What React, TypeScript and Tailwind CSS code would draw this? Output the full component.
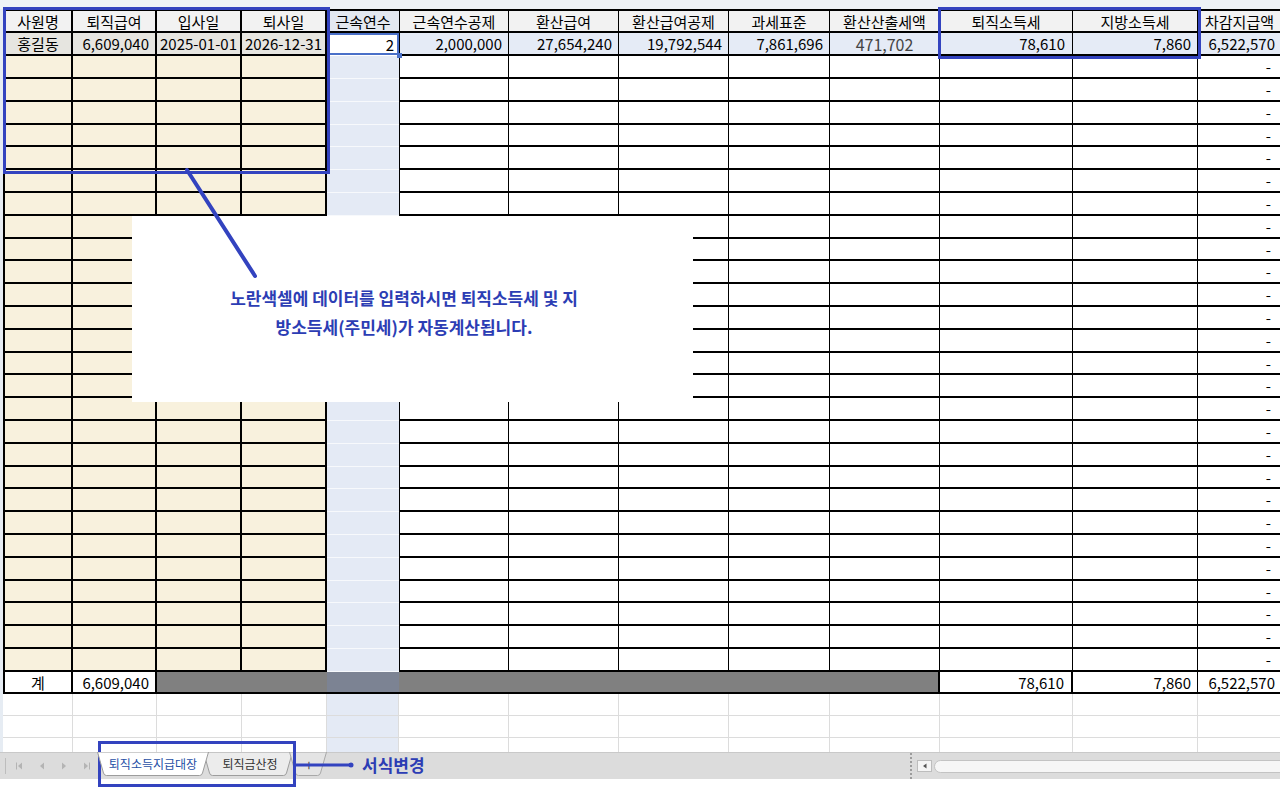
import React from 'react';

const GRID =
  'grid grid-cols-[70px_84px_85px_85px_72px_110px_110px_110px_101px_110px_133px_125px_84px]';

const headers = [
  '사원명', '퇴직급여', '입사일', '퇴사일', '근속연수', '근속연수공제', '환산급여',
  '환산급여공제', '과세표준', '환산산출세액', '퇴직소득세', '지방소득세', '차감지급액',
];

const headCls = [
  'border-l-2 border-t-2 border-r-2 border-b-2 border-black bg-[#f2f2f2]',
  'border-t-2 border-r-2 border-b-2 border-black bg-[#f2f2f2]',
  'border-t-2 border-r-2 border-b-2 border-black bg-[#f2f2f2]',
  'border-t-2 border-r-2 border-b-2 border-black bg-[#f2f2f2]',
  'border-t-2 border-b-2 border-black bg-[#e3e8f0]',
  'border-t-2 border-l border-r border-b-2 border-black bg-[#f2f2f2]',
  'border-t-2 border-r border-b-2 border-black bg-[#f2f2f2]',
  'border-t-2 border-r border-b-2 border-black bg-[#f2f2f2]',
  'border-t-2 border-r border-b-2 border-black bg-[#f2f2f2]',
  'border-t-2 border-r border-b-2 border-black bg-[#f2f2f2]',
  'border-t-2 border-r border-b-2 border-black bg-[#f2f2f2]',
  'border-t-2 border-r border-b-2 border-black bg-[#f2f2f2]',
  'border-t-2 border-r border-b-2 border-black bg-[#f2f2f2]',
];

const emptyCls = [
  'border-l-2 border-r-2 border-b-2 border-black bg-[#f8f1dd]',
  'border-r-2 border-b-2 border-black bg-[#f8f1dd]',
  'border-r-2 border-b-2 border-black bg-[#f8f1dd]',
  'border-r-2 border-b-2 border-black bg-[#f8f1dd]',
  'border-b border-[#f7f9fc] bg-[#e4eaf5]',
  'border-l border-r border-b-2 border-black bg-white',
  'border-r border-b-2 border-black bg-white',
  'border-r border-b-2 border-black bg-white',
  'border-r border-b-2 border-black bg-white',
  'border-r border-b-2 border-black bg-white',
  'border-r border-b-2 border-black bg-white',
  'border-r border-b-2 border-black bg-white',
  'border-r border-b-2 border-black bg-white justify-end pr-[10px]',
];

const firstRow: { text: string; cls: string }[] = [
  { text: '홍길동', cls: 'border-l-2 border-r-2 border-b-2 border-black bg-[#e6e5e0] justify-center' },
  { text: '6,609,040', cls: 'border-r-2 border-b-2 border-black bg-[#e6e5e0] justify-end pr-[6px]' },
  { text: '2025-01-01', cls: 'border-r-2 border-b-2 border-black bg-[#e6e5e0] justify-center' },
  { text: '2026-12-31', cls: 'border-r-2 border-b-2 border-black bg-[#e6e5e0] justify-center' },
  { text: '2', cls: 'relative bg-white justify-end pr-[5px]' },
  { text: '2,000,000', cls: 'border-l border-r border-b-2 border-black bg-[#e5ebf6] justify-end pr-[6px]' },
  { text: '27,654,240', cls: 'border-r border-b-2 border-black bg-[#e5ebf6] justify-end pr-[6px]' },
  { text: '19,792,544', cls: 'border-r border-b-2 border-black bg-[#e5ebf6] justify-end pr-[6px]' },
  { text: '7,861,696', cls: 'border-r border-b-2 border-black bg-[#e5ebf6] justify-end pr-[6px]' },
  { text: '471,702', cls: 'border-r border-b-2 border-black bg-[#e5ebf6] justify-center text-[16px] text-[#444]' },
  { text: '78,610', cls: 'border-r border-b-2 border-black bg-[#e5ebf6] justify-end pr-[7px]' },
  { text: '7,860', cls: 'border-r border-b-2 border-black bg-[#e5ebf6] justify-end pr-[6px]' },
  { text: '6,522,570', cls: 'border-r border-b-2 border-black bg-[#e5ebf6] justify-end pr-[6px]' },
];

const sumRow: { text: string; cls: string }[] = [
  { text: '계', cls: 'border-l-2 border-r-2 border-b-2 border-black bg-white justify-center' },
  { text: '6,609,040', cls: 'border-r-2 border-b-2 border-black bg-white justify-end pr-[6px]' },
  { text: '', cls: 'border-b-2 border-black bg-[#808080]' },
  { text: '', cls: 'border-b-2 border-black bg-[#808080]' },
  { text: '', cls: 'border-b-2 border-black bg-[#7c8393]' },
  { text: '', cls: 'border-b-2 border-black bg-[#808080]' },
  { text: '', cls: 'border-b-2 border-black bg-[#808080]' },
  { text: '', cls: 'border-b-2 border-black bg-[#808080]' },
  { text: '', cls: 'border-b-2 border-black bg-[#808080]' },
  { text: '', cls: 'border-r-2 border-b-2 border-black bg-[#808080]' },
  { text: '78,610', cls: 'border-r-2 border-b-2 border-black bg-white justify-end pr-[7px]' },
  { text: '7,860', cls: 'border-r border-b-2 border-black bg-white justify-end pr-[6px]' },
  { text: '6,522,570', cls: 'border-r border-b-2 border-black bg-white justify-end pr-[6px]' },
];

function Arrow({ dir, bar }: { dir: 'l' | 'r'; bar?: boolean }) {
  return (
    <svg width="10" height="10" viewBox="0 0 10 10" className="text-[#b4b4b4]">
      {dir === 'l' ? <path d="M7 1.5 L3 5 L7 8.5 Z" fill="currentColor" /> : <path d="M3 1.5 L7 5 L3 8.5 Z" fill="currentColor" />}
      {bar && dir === 'l' && <rect x="1" y="1.5" width="1" height="7" fill="currentColor" />}
      {bar && dir === 'r' && <rect x="8" y="1.5" width="1" height="7" fill="currentColor" />}
    </svg>
  );
}

export default function App() {
  const rows = Array.from({ length: 27 }, (_, i) => i + 1);
  return (
    <div className="relative h-[794px] w-[1280px] overflow-hidden bg-white font-['Noto_Sans_CJK_KR',sans-serif] text-[15px] leading-none text-black">
      <div className="h-[9px] bg-[#eef2f6]" />

      <div className="flex h-[743px]">
        <div className="w-[3px] shrink-0 bg-[#e6ecf3]" />
        <div className="flex-1 overflow-hidden">
          <div className={GRID}>
            {headers.map((h, c) => (
              <div key={c} className={`flex h-[24px] items-center justify-center whitespace-nowrap ${headCls[c]}`}>
                {h}
              </div>
            ))}

            {firstRow.map((cell, c) => (
              <div key={c} className={`flex h-[23px] items-center whitespace-nowrap ${cell.cls}`}>
                {c === 4 && (
                  <>
                    <span className="absolute inset-x-0 top-0 bottom-[1px] border-2 border-[#4a70c8]" />
                    <span className="absolute right-[-3px] bottom-[-2px] h-[5px] w-[5px] bg-[#4a70c8]" />
                  </>
                )}
                {cell.text}
              </div>
            ))}

            {rows.map((r) =>
              emptyCls.map((cls, c) => (
                <div
                  key={`${r}-${c}`}
                  className={`flex items-center ${r % 5 === 4 ? 'h-[22px]' : 'h-[23px]'} ${cls}`}
                >
                  {c === 12 ? '-' : ''}
                </div>
              )),
            )}

            {sumRow.map((cell, c) => (
              <div key={c} className={`flex h-[22px] items-center whitespace-nowrap ${cell.cls}`}>
                {cell.text}
              </div>
            ))}

            {[0, 1, 2].map((r) =>
              headers.map((_, c) => (
                <div
                  key={`g${r}-${c}`}
                  className={`h-[22px] border-r border-b border-[#dcdcdc] ${c === 4 ? 'bg-[#e4eaf5]' : 'bg-white'}`}
                />
              )),
            )}
          </div>
        </div>
      </div>

      {/* sheet tab bar */}
      <div className="flex h-[27px] items-start border-t border-[#c9c9c9] bg-[#dcdcdc]">
        <div className="flex h-full w-[97px] shrink-0 items-center">
          <div className="ml-[5px] h-[16px] w-px bg-[#bdbdbd]" />
          <div className="ml-[9px] flex items-center gap-[12px]">
            <Arrow dir="l" bar />
            <Arrow dir="l" />
            <Arrow dir="r" />
            <Arrow dir="r" bar />
          </div>
        </div>

        <div className="relative z-10 -mt-px flex h-[24px] w-[112px] shrink-0 items-center justify-center">
          <svg className="absolute inset-0" width="112" height="24" viewBox="0 0 112 24">
            <path d="M0.5 0 L111.5 0 L105.5 21 Q104.8 23.5 102.5 23.5 L9.5 23.5 Q7.2 23.5 6.5 21 Z" fill="#fff" stroke="#9d9d9d" />
          </svg>
          <span className="relative text-[12px] text-[#1f4fa6]">퇴직소득지급대장</span>
        </div>

        <div className="relative -mt-px -ml-[6px] flex h-[24px] w-[90px] shrink-0 items-center justify-center">
          <svg className="absolute inset-0" width="90" height="24" viewBox="0 0 90 24">
            <path d="M0.5 0 L89.5 0 L83.5 21 Q82.8 23.5 80.5 23.5 L9.5 23.5 Q7.2 23.5 6.5 21 Z" fill="#ececec" stroke="#9d9d9d" />
          </svg>
          <span className="relative ml-[4px] text-[12px] text-[#333]">퇴직금산정</span>
        </div>

        <div className="relative -mt-px -ml-[4px] flex h-[24px] w-[38px] shrink-0 items-center justify-center">
          <svg className="absolute inset-0" width="38" height="24" viewBox="0 0 38 24">
            <path d="M0.5 0 L37.5 0 L31.5 21 Q30.8 23.5 28.5 23.5 L9.5 23.5 Q7.2 23.5 6.5 21 Z" fill="#e4e4e4" stroke="#a8a8a8" />
          </svg>
          <span className="relative ml-[2px] text-[15px] text-[#555]">+</span>
        </div>

        <div className="ml-auto flex h-full w-[370px] shrink-0 items-center">
          <div className="h-full w-[3px] border-l-2 border-dotted border-[#9c9c9c]" />
          <div className="ml-[4px] flex h-[12px] w-[15px] items-center justify-center border border-[#bdbdbd] bg-[#f5f5f5]">
            <svg width="6" height="6" viewBox="0 0 6 6">
              <path d="M4.5 0.5 L1 3 L4.5 5.5 Z" fill="#555" />
            </svg>
          </div>
          <div className="ml-[2px] -mr-[20px] h-[13px] flex-1 rounded-full border border-[#c3c3c3] bg-[#f6f6f6]" />
        </div>
      </div>

      <div className="h-[15px] bg-white" />

      {/* annotations */}
      <div className="absolute left-[132px] top-[216px] flex h-[186px] w-[561px] flex-col items-center justify-center bg-white pr-[17px] pt-[6px] text-[17px] font-bold leading-[29px] text-[#2c3db4]">
        <div>노란색셀에 데이터를 입력하시면 퇴직소득세 및 지</div>
        <div>방소득세(주민세)가 자동계산됩니다.</div>
      </div>

      <div className="pointer-events-none absolute left-[3px] top-[7px] h-[167px] w-[327px] border-[3px] border-[#3343bf]" />
      <div className="pointer-events-none absolute left-[938px] top-[7px] h-[52px] w-[263px] border-[3px] border-[#3343bf]" />
      <div className="pointer-events-none absolute left-[98px] top-[741px] h-[46px] w-[198px] border-[3px] border-[#3343bf]" />

      <svg className="pointer-events-none absolute inset-0" width="1280" height="794" viewBox="0 0 1280 794">
        <line x1="187" y1="170" x2="255" y2="276" stroke="#3343bf" strokeWidth="4" strokeLinecap="round" />
        <line x1="296" y1="765" x2="351" y2="765" stroke="#3343bf" strokeWidth="3" strokeLinecap="round" />
        <circle cx="351" cy="765" r="2.5" fill="#3343bf" />
      </svg>

      <div className="absolute left-[362px] top-[756px] text-[17px] font-bold leading-none text-[#2c3db4]">서식변경</div>
    </div>
  );
}
